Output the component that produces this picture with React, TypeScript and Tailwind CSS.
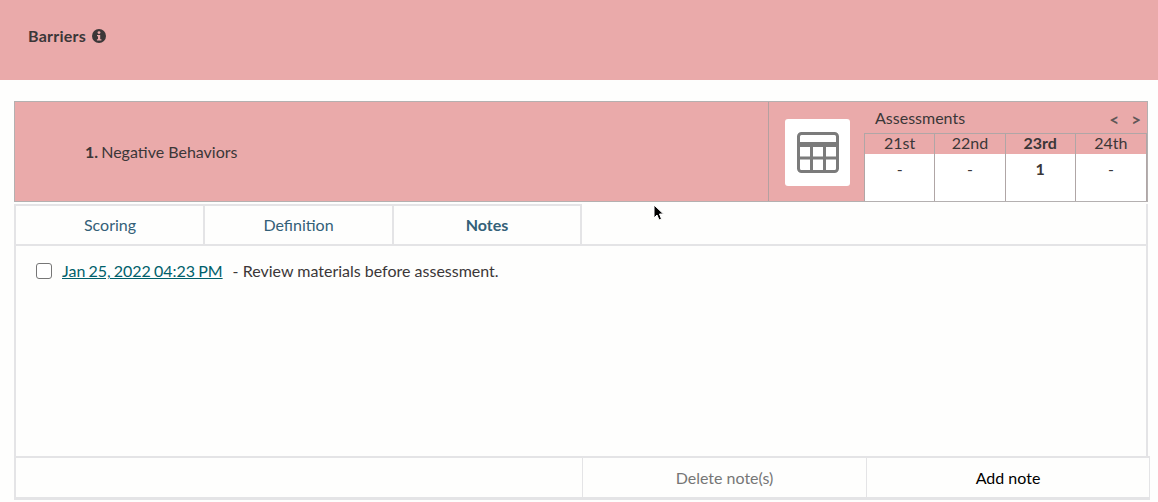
import { useState } from "react";

const assessments = [
  { label: "21st", value: "-" },
  { label: "22nd", value: "-" },
  { label: "23rd", value: "1", current: true },
  { label: "24th", value: "-" },
];

const tabs = [
  { label: "Scoring", className: "w-[189px] pl-px" },
  { label: "Definition", className: "w-[189px]" },
  { label: "Notes", className: "w-[188px] font-bold" },
];

const App = () => {
  const [checked, setChecked] = useState(false);

  return (
    <div className="relative w-[1158px] h-[502px] overflow-hidden bg-[#fefefd] font-['Lato',sans-serif] text-[16px] text-[#3b3738]">
      <header className="h-20 bg-[#eaaaaa] pl-7 flex items-center gap-[6px] pb-[9px]">
        <h1 className="font-bold text-[16px] leading-5 tracking-[0.25px]">Barriers</h1>
        <svg width="14" height="14" viewBox="0 0 14 14" className="mt-px">
          <circle cx="7" cy="7" r="7" fill="#3b3738" />
          <circle cx="7" cy="3.6" r="1.4" fill="#eaaaaa" />
          <path d="M5 6h3.2v4.2H9.4v1.4H4.9v-1.4H6V7.3H5z" fill="#eaaaaa" />
        </svg>
      </header>

      <section className="ml-[14px] mt-[21px] w-[1134px]">
        <div className="flex h-[101px] border border-[#b4b0b0] bg-[#eaaaaa]">
          <div className="w-[754px] shrink-0 border-r border-[#b4a0a0] pl-[70px] flex items-center">
            <p>
              <span className="font-bold -mr-px">1.</span> Negative Behaviors
            </p>
          </div>
          <div className="flex-1 flex pl-4 items-stretch">
            <div className="mt-[17px] w-[65px] h-[67px] bg-white rounded-[3px] flex items-center justify-center">
              <svg width="42" height="41" viewBox="0 0 42 41" fill="none">
                <rect x="1.500" y="1.500" width="39" height="38" rx="3" stroke="#7b7b7b" strokeWidth="3" />
                <path d="M1.500 12.500h39" stroke="#7b7b7b" strokeWidth="5" />
                <path d="M1.500 26h39M14.500 12v27M27.500 12v27" stroke="#7b7b7b" strokeWidth="3" />
              </svg>
            </div>
            <div className="ml-[14px] flex-1 flex flex-col">
              <div className="h-[31px] flex items-start justify-between pt-[6px] pl-[11px] pr-[6px]">
                <span className="leading-[20px]">Assessments</span>
                <span className="flex gap-[12px] font-bold text-[17px] leading-[20px] text-[#5f5757] pt-[2px]">
                  <span>&lt;</span>
                  <span>&gt;</span>
                </span>
              </div>
              <div className="grid grid-cols-4 flex-1 border-l border-t border-r border-[#b0a6a6] bg-white">
                {assessments.map((a, i) => (
                  <div key={a.label} className={`flex flex-col ${i < 3 ? "border-r border-[#b0a6a6]" : ""}`}>
                    <div className={`h-[20px] bg-[#eaaaaa] text-center leading-[18px] ${a.current ? "font-bold" : ""}`}>
                      {a.label}
                    </div>
                    <div className={`flex-1 text-center pt-[5px] leading-[20px] ${a.current ? "font-bold" : ""}`}>
                      {a.value}
                    </div>
                  </div>
                ))}
              </div>
            </div>
          </div>
        </div>

        <div className="flex mt-[2px] h-[42px] border-l-2 border-b-2 border-r-2 border-[#e4e4e6]">
          {tabs.map((tab) => (
            <div
              key={tab.label}
              className={`${tab.className} border-r-2 border-t-2 border-[#e4e4e6] flex items-center justify-center text-[#336078]`}
            >
              {tab.label}
            </div>
          ))}
        </div>

        <div className="h-[210px] border-l-2 border-r-2 border-[#e4e4e6] pl-5 pt-[15px] flex items-start">
          <input
            type="checkbox"
            checked={checked}
            onChange={(e) => setChecked(e.target.checked)}
            className="appearance-none mt-[2px] w-4 h-4 rounded-[3px] border border-[#767676] bg-white"
          />
          <a href="#" className="ml-[10px] text-[#00606b] underline leading-5 [word-spacing:-1px]">
            Jan 25, 2022 04:23 PM
          </a>
          <span className="ml-[10px] leading-5">- Review materials before assessment.</span>
        </div>
      </section>

      <footer className="ml-[14px] w-[1136px] h-[44px] flex border-t-2 border-l-2 border-b-[3px] border-[#e4e4e6]">
        <div className="w-[566px]" />
        <button className="w-[284px] border-l border-[#e4e4e6] text-[#767676]">Delete note(s)</button>
        <button className="flex-1 border-l border-r border-[#e4e4e6] text-black">Add note</button>
      </footer>

      {/* mouse pointer caught in the capture */}
      <svg width="13" height="18" viewBox="0 0 13 18" className="absolute left-[653px] top-[204px]">
        <path d="M1 1v13l3-3 2 5 2.500-1-2-5h4z" fill="#000" stroke="#fff" strokeWidth="1" />
      </svg>
    </div>
  );
};

export default App;
